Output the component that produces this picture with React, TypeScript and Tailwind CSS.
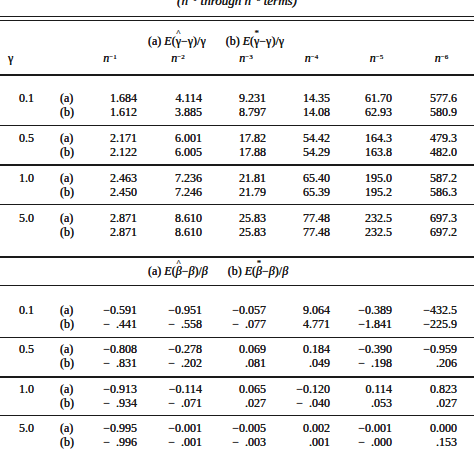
import React from 'react';

type Group = { g: string; a: string[]; b: string[]; pad: string };

const gammaRows: Group[] = [
  { g: '0.1', a: ['1.684', '4.114', '9.231', '14.35', '61.70', '577.6'], b: ['1.612', '3.885', '8.797', '14.08', '62.93', '580.9'], pad: 'pt-[15px] pb-[6px]' },
  { g: '0.5', a: ['2.171', '6.001', '17.82', '54.42', '164.3', '479.3'], b: ['2.122', '6.005', '17.88', '54.29', '163.8', '482.0'], pad: 'pt-[5px] pb-[5px]' },
  { g: '1.0', a: ['2.463', '7.236', '21.81', '65.40', '195.0', '587.2'], b: ['2.450', '7.246', '21.79', '65.39', '195.2', '586.3'], pad: 'pt-[5px] pb-[5px]' },
  { g: '5.0', a: ['2.871', '8.610', '25.83', '77.48', '232.5', '697.3'], b: ['2.871', '8.610', '25.83', '77.48', '232.5', '697.2'], pad: 'pt-[6px] pb-[17px]' },
];

// "−_" means a minus followed by a blank digit place, as in the printed table
const betaRows: Group[] = [
  { g: '0.1', a: ['−0.591', '−0.951', '−0.057', '9.064', '−0.389', '−432.5'], b: ['−_.441', '−_.558', '−_.077', '4.771', '−1.841', '−225.9'], pad: 'pt-[17px] pb-[5.5px]' },
  { g: '0.5', a: ['−0.808', '−0.278', '0.069', '0.184', '−0.390', '−0.959'], b: ['−_.831', '−_.202', '.081', '.049', '−_.198', '.206'], pad: 'pt-[4px] pb-[6px]' },
  { g: '1.0', a: ['−0.913', '−0.114', '0.065', '−0.120', '0.114', '0.823'], b: ['−_.934', '−_.071', '.027', '−_.040', '.053', '.027'], pad: 'pt-[4.5px] pb-[4.5px]' },
  { g: '5.0', a: ['−0.995', '−0.001', '−0.005', '0.002', '−0.001', '0.000'], b: ['−_.996', '−_.001', '−_.003', '.001', '−_.000', '.153'], pad: 'pt-[5px] pb-[4px]' },
];

const cols = 'grid grid-cols-[57px_20px_60px_65px_64px_64px_62px_65px] h-[14px]';

function Rule() {
  return <div className="h-[1.5px] bg-[#1a1a1a]" />;
}

function Num({ v }: { v: string }) {
  if (v.startsWith('−_')) {
    return (
      <span>
        −<span className="invisible">0</span>
        {v.slice(2)}
      </span>
    );
  }
  return <span>{v}</span>;
}

function Acc({ base, mark, italic }: { base: string; mark: string; italic?: boolean }) {
  return (
    <span className={`relative inline-block ${italic ? 'italic' : ''}`}>
      {base}
      <span className="absolute left-0 right-0 -top-[8px] text-center text-[9px] not-italic">{mark}</span>
    </span>
  );
}

function Rows({ data }: { data: Group[] }) {
  return (
    <>
      {data.map((grp, i) => (
        <div key={grp.g}>
          {i > 0 && <Rule />}
          <div className={grp.pad}>
            {(['a', 'b'] as const).map((k) => (
              <div key={k} className={cols}>
                <div className="pl-[19px]">{k === 'a' ? grp.g : ''}</div>
                <div className="pl-[3px]">({k})</div>
                {grp[k].map((v, j) => (
                  <div key={j} className="text-right">
                    <Num v={v} />
                  </div>
                ))}
              </div>
            ))}
          </div>
        </div>
      ))}
    </>
  );
}

export default function App() {
  return (
    <div className="w-[474px] h-[467px] overflow-hidden bg-white text-[#1c1c1c] font-['Liberation_Serif',serif] text-[12px] leading-[14px] [text-shadow:0_0_0.5px_#000]">
      {/* title, cut off by the top edge as in the scan */}
      <div className="-mt-[6px] h-[14px] text-center italic text-[13px]">
        (n<sup className="text-[8px]">−1</sup> through n<sup className="text-[8px]">−6</sup> terms)
      </div>
      <div className="mt-[8px] h-[5px] border-t-[1.5px] border-b border-[#1a1a1a]" />

      {/* column heads */}
      <div className="pt-[13px] pb-[9px]">
        <div className="flex h-[14px] pl-[148px] gap-[20px]">
          <span>
            (a) <i>E</i>(<Acc base="γ" mark="^" />−γ)/γ
          </span>
          <span>
            (b) <i>E</i>(<Acc base="γ" mark="*" />−γ)/γ
          </span>
        </div>
        <div className="mt-[3px] grid grid-cols-[77px_66px_70px_66px_65px_65px_65px] h-[14px]">
          <div className="pl-[8px]">γ</div>
          {[1, 2, 3, 4, 5, 6].map((p) => (
            <div key={p} className="text-center">
              <i>n</i>
              <sup className="text-[7px]">−{p}</sup>
            </div>
          ))}
        </div>
      </div>
      <Rule />

      <Rows data={gammaRows} />
      <Rule />

      <div className="pt-[6.5px] pb-[6.5px]">
        <div className="flex h-[14px] pl-[148px] gap-[20px]">
          <span>
            (a) <i>E</i>(<Acc base="β" mark="^" italic />−<i>β</i>)/<i>β</i>
          </span>
          <span>
            (b) <i>E</i>(<Acc base="β" mark="*" italic />−<i>β</i>)/<i>β</i>
          </span>
        </div>
      </div>
      <Rule />

      <Rows data={betaRows} />
    </div>
  );
}
